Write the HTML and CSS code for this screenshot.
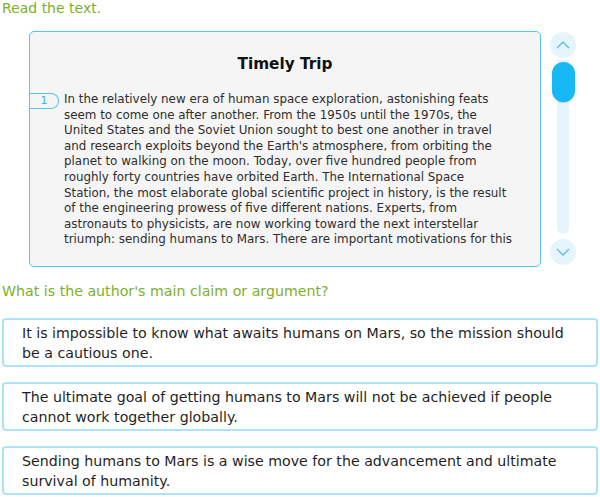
FILE: index.html
```html
<!DOCTYPE html>
<html>
<head>
<meta charset="utf-8">
<link rel="stylesheet" href="styles.css">
</head>
<body>
<div class="page">
  <div class="prompt">Read the text.</div>
  <div class="reader">
    <div class="passage">
      <div class="title">Timely Trip</div>
      <div class="para">
        <div class="num">1</div>
        <div class="lines">
          <span>In the relatively new era of human space exploration, astonishing feats</span>
          <span>seem to come one after another. From the 1950s until the 1970s, the</span>
          <span>United States and the Soviet Union sought to best one another in travel</span>
          <span>and research exploits beyond the Earth's atmosphere, from orbiting the</span>
          <span>planet to walking on the moon. Today, over five hundred people from</span>
          <span>roughly forty countries have orbited Earth. The International Space</span>
          <span>Station, the most elaborate global scientific project in history, is the result</span>
          <span>of the engineering prowess of five different nations. Experts, from</span>
          <span>astronauts to physicists, are now working toward the next interstellar</span>
          <span>triumph: sending humans to Mars. There are important motivations for this</span>
        </div>
      </div>
    </div>
    <div class="scroll">
      <div class="btn"><svg width="14" height="8" viewBox="0 0 14 8"><path d="M1 7 L7 1 L13 7" fill="none" stroke="#5bbfea" stroke-width="1.4"/></svg></div>
      <div class="track"><div class="thumb"></div></div>
      <div class="btn"><svg width="14" height="8" viewBox="0 0 14 8"><path d="M1 1 L7 7 L13 1" fill="none" stroke="#5bbfea" stroke-width="1.4"/></svg></div>
    </div>
  </div>
  <div class="question">What is the author's main claim or argument?</div>
  <div class="options">
    <div class="opt">It is impossible to know what awaits humans on Mars, so the mission should be a cautious one.</div>
    <div class="opt">The ultimate goal of getting humans to Mars will not be achieved if people cannot work together globally.</div>
    <div class="opt">Sending humans to Mars is a wise move for the advancement and ultimate survival of humanity.</div>
  </div>
</div>
</body>
</html>
```

FILE: styles.css
```css
html, body {
  margin: 0;
  padding: 0;
  background: #ffffff;
}
.page {
  width: 600px;
  height: 497px;
  overflow: hidden;
  font-family: "DejaVu Sans", Verdana, sans-serif;
  color: #222;
}
.prompt {
  color: #7eb02a;
  font-size: 14px;
  line-height: 17px;
  padding-left: 2px;
  height: 31px;
}
.reader {
  display: flex;
  align-items: flex-start;
  padding-left: 29px;
}
.passage {
  width: 510px;
  height: 234px;
  border: 1.5px solid #56c5f2;
  border-radius: 5px;
  background: #f5f5f5;
  box-sizing: content-box;
  overflow: hidden;
}
.title {
  text-align: center;
  font-weight: bold;
  font-size: 15.3px;
  line-height: 18px;
  padding-top: 23px;
  height: 37px;
  color: #111;
}
.para {
  display: flex;
  align-items: flex-start;
}
.num {
  width: 28px;
  height: 14px;
  margin-top: 1px;
  border: 1px solid #56c5f2;
  border-left: none;
  border-radius: 0 8px 8px 0;
  color: #3fb4e8;
  font-size: 11px;
  line-height: 14px;
  text-align: center;
  margin-right: 5px;
  flex: none;
}
.lines {
  display: flex;
  flex-direction: column;
  font-size: 11.9px;
  line-height: 15.6px;
  color: #2e2e2e;
  white-space: nowrap;
}
.scroll {
  margin-left: 9px;
  width: 26px;
  display: flex;
  flex-direction: column;
  align-items: center;
  padding-top: 1px;
}
.btn {
  width: 26px;
  height: 26px;
  border-radius: 50%;
  background: #e6f4fb;
  display: flex;
  align-items: center;
  justify-content: center;
}
.track {
  width: 12px;
  height: 174px;
  background: #e6f4fb;
  border-radius: 0 0 6px 6px;
  margin-top: 2px;
  margin-bottom: 5px;
  position: relative;
}
.thumb {
  position: absolute;
  left: -5.5px;
  top: 2px;
  width: 23px;
  height: 40px;
  border-radius: 11.5px;
  background: #16b9f4;
  box-shadow: 0 1px 1px rgba(0,0,0,0.15);
}
.question {
  color: #7eb02a;
  font-size: 14.2px;
  line-height: 17px;
  padding-left: 2px;
  margin-top: 16px;
  height: 35px;
}
.options {
  display: flex;
  flex-direction: column;
  gap: 15px;
  padding-left: 2px;
  width: 596px;
}
.opt {
  border: 2px solid #aee3f7;
  border-radius: 4px;
  padding: 3px 18px 2px 18px;
  font-size: 14.2px;
  line-height: 20px;
  color: #1f1f1f;
  height: 40px;
  box-sizing: content-box;
}
```
